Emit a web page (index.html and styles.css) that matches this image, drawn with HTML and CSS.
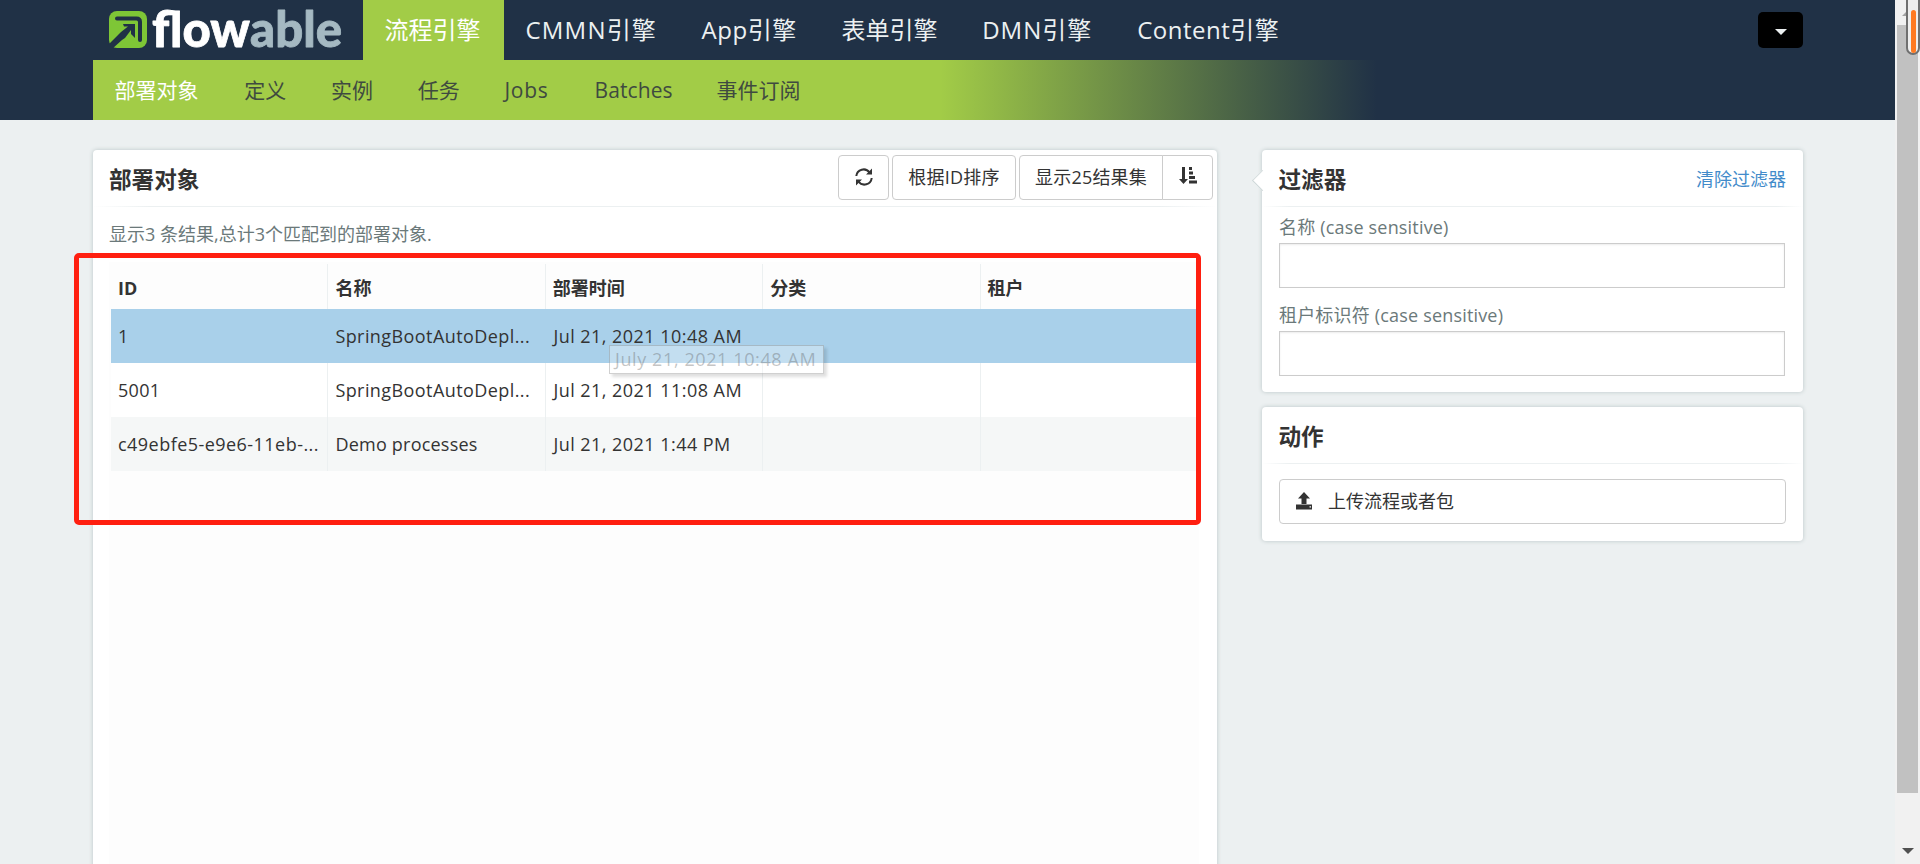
FILE: index.html
```html
<!DOCTYPE html>
<html lang="zh-CN">
<head>
  <meta charset="UTF-8">
  <meta name="viewport" content="width=device-width, initial-scale=1.0">
  <title>Flowable</title>
  <link rel="stylesheet" href="styles.css">
</head>
<body>
  <div class="page">
    <header class="header">
      <div class="navbar">
        <svg class="logo" width="270" height="60" viewBox="0 0 270 60">
          <rect x="16" y="11" width="38" height="37" rx="8" fill="#7ec636"/>
          <path d="M24 18.500H43.500Q47 18.500 47 22V40" fill="none" stroke="#203146" stroke-width="4" stroke-linecap="round"/>
          <path d="M30 24H42V38L38 34V30L32 38L29 40L19 49H15V45L26 34L28 32L35 26.500H31Z" fill="#203146"/>
          <text class="logo-text" x="59" y="47" textLength="98" lengthAdjust="spacingAndGlyphs" fill="#fff" stroke="#fff">flow</text>
          <text class="logo-text" x="157" y="47" textLength="92" lengthAdjust="spacingAndGlyphs" fill="#a5b9c2" stroke="#a5b9c2">able</text>
        </svg>
        <nav class="main-nav">
          <a class="active">流程引擎</a>
          <a class="cmmn">CMMN引擎</a>
          <a class="app">App引擎</a>
          <a>表单引擎</a>
          <a class="dmn">DMN引擎</a>
          <a class="content">Content引擎</a>
        </nav>
        <button class="account"><span class="caret"></span></button>
      </div>
      <nav class="sub-nav">
        <a class="active">部署对象</a>
        <a>定义</a>
        <a>实例</a>
        <a>任务</a>
        <a class="jobs">Jobs</a>
        <a class="batches">Batches</a>
        <a>事件订阅</a>
      </nav>
    </header>

    <main class="content-row">
      <section class="panel list-panel">
        <div class="panel-head">
          <h2>部署对象</h2>
          <div class="toolbar">
            <button class="btn refresh">
              <svg width="18" height="18" viewBox="0 0 18 18" fill="none" stroke="#333" stroke-width="2">
                <path d="M1.300 8A7.300 7.300 0 0 1 14.500 4.500M16.700 10A7.300 7.300 0 0 1 3.500 13.500"/>
                <path d="M17 .5V6.500H11ZM1 17.500V11.500H7Z" fill="#333" stroke="none"/>
              </svg>
            </button>
            <button class="btn sort">根据ID排序</button>
            <div class="btn-group">
              <button class="btn size">显示25结果集</button>
              <button class="btn order">
                <svg width="18" height="18" viewBox="0 0 18 18" fill="#333">
                  <path d="M3 0H6V12H9L4.500 17L0 12H3ZM10 0H13V3H10ZM10 4.500H14V7.500H10ZM10 9H16V12H10ZM10 13.500H18V16.500H10Z"/>
                </svg>
              </button>
            </div>
          </div>
        </div>
        <div class="rule"></div>
        <p class="summary">显示3 条结果,总计3个匹配到的部署对象.</p>

        <div class="grid">
          <div class="row head">
            <div>ID</div><div>名称</div><div>部署时间</div><div>分类</div><div>租户</div>
          </div>
          <div class="row selected">
            <div>1</div><div class="name">SpringBootAutoDepl...</div><div class="time">Jul 21, 2021 10:48 AM</div><div></div><div></div>
          </div>
          <div class="row">
            <div class="num">5001</div><div class="name">SpringBootAutoDepl...</div><div class="time">Jul 21, 2021 11:08 AM</div><div></div><div></div>
          </div>
          <div class="row odd">
            <div class="uuid">c49ebfe5-e9e6-11eb-...</div><div class="demo">Demo processes</div><div class="time">Jul 21, 2021 1:44 PM</div><div></div><div></div>
          </div>
        </div>
      </section>

      <aside class="side">
        <section class="panel filter">
          <div class="panel-head">
            <h2>过滤器</h2>
            <a class="clear">清除过滤器</a>
          </div>
          <div class="rule"></div>
          <label>名称 (case sensitive)</label>
          <input type="text">
          <label>租户标识符 (case sensitive)</label>
          <input type="text">
        </section>
        <section class="panel actions">
          <div class="panel-head"><h2>动作</h2></div>
          <div class="rule"></div>
          <button class="btn upload">
            <svg width="18" height="18" viewBox="0 0 18 18" fill="#333">
              <path d="M9 0L15 6.500H11.500V12H6.500V6.500H3Z"/>
              <path fill-rule="evenodd" d="M1 12.500H17V17.500H1ZM14.500 14.300V15.600H16V14.300Z"/>
            </svg>
            上传流程或者包
          </button>
        </section>
      </aside>
    </main>
  </div>

  <!-- scrollbar -->
  <div class="scrollbar">
    <span class="arrow up"></span>
    <div class="thumb"></div>
    <span class="arrow down"></span>
  </div>

  <div class="tooltip">July 21, 2021 10:48 AM</div>
  <div class="highlight"></div>
  <div class="marker"><span></span></div>
</body>
</html>
```
FILE: styles.css
```css
* {
  box-sizing: border-box;
}
body {
  margin: 0;
  height: 864px;
  display: flex;
  overflow: hidden;
  position: relative;
  background: #ecf0f1;
  color: #333;
  font-family: "Open Sans", "Noto Sans CJK SC", sans-serif;
  font-size: 18px;
  line-height: 26px;
}
button, input {
  font: inherit;
  color: inherit;
}
.page {
  width: 1895px;
  height: 864px;
  overflow: hidden;
}

/* header */
.header {
  height: 120px;
  padding: 0 92px 0 93px;
  background: #203146;
}
.navbar {
  height: 60px;
  display: flex;
}
.logo {
  flex: none;
}
.logo-text {
  font-family: Lato, sans-serif;
  font-size: 49px;
  font-weight: 900;
  stroke-width: 0.8px;
  stroke-linejoin: round;
}
.main-nav, .sub-nav {
  display: flex;
  white-space: nowrap;
}
.main-nav a {
  padding: 0 22.4px;
  font-size: 24px;
  line-height: 60px;
  color: #ecf0f1;
}
.main-nav .active {
  padding: 0 23.5px 0 21.5px;
  background: #a2cc47;
  color: #fff;
}
.main-nav .cmmn {
  width: 175px;
  padding-left: 21.5px;
  letter-spacing: 1.2px;
}
.main-nav .app {
  width: 140px;
  letter-spacing: 0.6px;
}
.main-nav .dmn {
  width: 155px;
  letter-spacing: 1px;
}
.main-nav .content {
  letter-spacing: 0.5px;
}
.account {
  width: 45px;
  height: 36px;
  margin: 12px 0 0 auto;
  padding: 0;
  display: flex;
  align-items: center;
  justify-content: center;
  background: #000;
  border: none;
  border-radius: 5px;
}
.caret {
  margin-top: 3px;
  border: 6px solid transparent;
  border-top-color: #ecf0f1;
  border-bottom: 0;
}
.sub-nav {
  width: 1284px;
  height: 60px;
  background: linear-gradient(to right, #a2cc47 66%, #203146);
}
.sub-nav a {
  padding: 0 22.4px;
  font-size: 21px;
  line-height: 60px;
  color: #3f4a40;
}
.sub-nav .active {
  padding: 0 23.2px 0 21.6px;
  color: #fff;
}
.sub-nav .jobs {
  width: 90px;
  letter-spacing: 0.7px;
}
.sub-nav .batches {
  width: 122px;
  letter-spacing: 0.1px;
}

/* panels */
.content-row {
  display: flex;
  gap: 45px;
  padding: 30px 92px 0 93px;
}
.panel {
  background: #fff;
  border-radius: 4px;
  box-shadow: 0 0 4px #b9c5c7;
}
.list-panel {
  width: 1124px;
  height: 760px;
}
.panel-head {
  height: 56px;
  padding: 0 17px 0 16px;
  display: flex;
  justify-content: space-between;
}
h2 {
  margin: 0;
  font-size: 22.6px;
  font-weight: bold;
  line-height: 60px;
}
.rule {
  height: 1px;
  background: linear-gradient(to right, #fff, #ecf0f1 5%, #ecf0f1 95%, #fff);
}
.toolbar {
  display: flex;
  gap: 3px;
  margin: 5px -13px 0 0;
}
.btn {
  height: 45px;
  padding: 0 0 2px;
  display: flex;
  align-items: center;
  justify-content: center;
  background: #fff;
  border: 1px solid #ccc;
  border-radius: 4px;
  white-space: nowrap;
}
.refresh {
  width: 51px;
}
.sort {
  width: 124px;
  letter-spacing: 0.2px;
}
.btn-group {
  display: flex;
}
.size {
  width: 144px;
  border-radius: 4px 0 0 4px;
  letter-spacing: 0.2px;
}
.order {
  width: 51px;
  margin-left: -1px;
  padding-bottom: 4px;
  border-radius: 0 4px 4px 0;
}
.summary {
  margin: 14px 16px 15px;
  color: #6b797a;
}

/* deployments table */
.grid {
  height: 650px;
  margin: 0 18px 0 16px;
  padding: 2px 0 0 2px;
  background: #fdfdfd;
}
.row {
  width: 1087px;
  height: 54px;
  display: flex;
  background: #fff;
  line-height: 54px;
}
.row div {
  width: 217.4px;
  padding-left: 7px;
  border-right: 1px solid #ecf0f1;
  white-space: nowrap;
}
.row.head {
  height: 45px;
  background: #fdfdfd;
  font-weight: bold;
  line-height: 49px;
}
.row.selected {
  background: #a9d0ea;
}
.row.selected div {
  border-color: transparent;
}
.row.odd {
  background: #f5f7f7;
}
.row .name {
  letter-spacing: 0.42px;
}
.row .time {
  padding-left: 7.6px;
  letter-spacing: 0.46px;
}
.row .uuid {
  letter-spacing: 0.46px;
}
.row .demo {
  letter-spacing: 0.22px;
}
.row .num {
  letter-spacing: 0.3px;
}

/* right column */
.side {
  width: 541px;
  flex: none;
}
.filter {
  height: 242px;
  position: relative;
}
.filter::before {
  content: "";
  position: absolute;
  left: -7px;
  top: 23px;
  width: 14px;
  height: 14px;
  background: #fff;
  border-left: 1px solid #d3dbdc;
  border-bottom: 1px solid #cbd5d6;
  transform: rotate(45deg);
}
.clear {
  color: #428bca;
  line-height: 58px;
}
.side .panel-head {
  padding-left: 16.5px;
}
.filter label {
  display: block;
  height: 36px;
  padding-left: 17px;
  line-height: 41px;
  letter-spacing: 0.18px;
  color: #6b797a;
}
.filter input {
  display: block;
  width: 506px;
  height: 45px;
  margin: 0 17px 7px;
  border: 1px solid #ccc;
  box-shadow: inset 0 1px 2px rgba(0, 0, 0, 0.08);
}
.actions {
  height: 134px;
  margin-top: 15px;
}
.upload {
  width: 507px;
  margin: 15px 17px 0;
  padding-left: 15px;
  gap: 15px;
  justify-content: flex-start;
}

/* scrollbar */
.scrollbar {
  width: 25px;
  height: 864px;
  padding: 10px 2px 10px;
  display: flex;
  flex-direction: column;
  align-items: center;
  background: #f1f1f1;
}
.thumb {
  width: 21px;
  height: 768px;
  margin-top: 9px;
  background: #c1c1c1;
}
.arrow {
  border: 6px solid transparent;
}
.arrow.up {
  border-top: 0;
  border-bottom-color: #a3a3a3;
}
.arrow.down {
  margin-top: auto;
  border-bottom: 0;
  border-top-color: #505050;
}

/* overlays */
.tooltip {
  position: absolute;
  left: 609px;
  top: 345px;
  width: 215px;
  height: 29px;
  padding-left: 5px;
  background: rgba(255, 255, 255, 0.3);
  border: 1px solid rgba(100, 100, 100, 0.3);
  box-shadow: 3px 3px 3px rgba(0, 0, 0, 0.13);
  color: rgba(87, 87, 87, 0.35);
  letter-spacing: 0.6px;
  white-space: nowrap;
}
.highlight {
  position: absolute;
  left: 74px;
  top: 253px;
  width: 1127px;
  height: 272px;
  border: 5px solid #ff1f10;
  border-radius: 5px;
}
.marker {
  position: absolute;
  left: 1906px;
  top: -10px;
  width: 14px;
  height: 65px;
  padding: 18px 0 0 3px;
  background: #eee;
  border: 2px solid #707070;
  border-radius: 7px;
}
.marker span {
  display: block;
  width: 5px;
  height: 43px;
  background: #ff7a22;
  border-radius: 3px;
}
```
